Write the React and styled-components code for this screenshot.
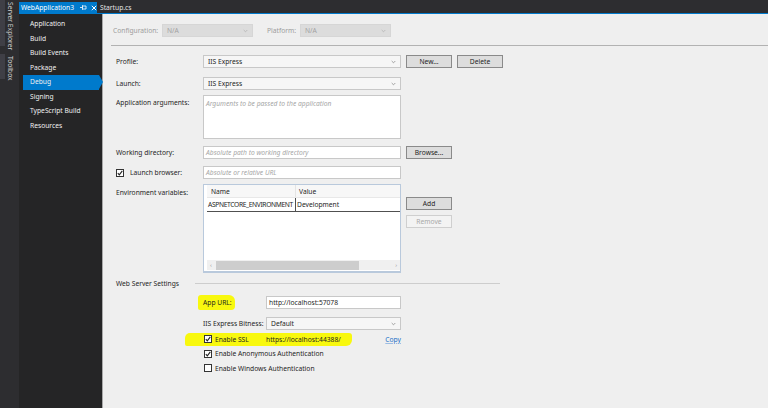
import React from 'react';
import styled, { createGlobalStyle } from 'styled-components';

const Global = createGlobalStyle`
  html, body { margin: 0; padding: 0; background: #2d2d30; }
  body { font-family: "Noto Sans", "Open Sans", sans-serif; font-size: 6.7px; color: #1e1e1e; }
  * { box-sizing: border-box; }
`;

const Root = styled.div`
  display: flex;
  width: 768px;
  height: 408px;
  overflow: hidden;
  background: #2d2d30;
`;

const SideStrip = styled.div`
  width: 19px;
  flex: none;
  display: flex;
  flex-direction: column;
  gap: 8px;
`;

const VTab = styled.div`
  display: flex;
  height: ${p => p.$h}px;
`;

const VStripe = styled.div`
  width: 5px;
  background: #3f3f46;
`;

const VText = styled.div`
  writing-mode: vertical-rl;
  color: #d0d0d0;
  padding: 2px 0 0 1px;
  font-size: 6.7px;
  white-space: nowrap;
`;

const Main = styled.div`
  flex: 1;
  display: flex;
  flex-direction: column;
  min-width: 0;
`;

const TabBar = styled.div`
  height: 14px;
  flex: none;
  display: flex;
  align-items: flex-end;
  border-bottom: 1px solid #007acc;
  background: #2d2d30;
`;

const DocTab = styled.div`
  height: 11px;
  display: flex;
  align-items: center;
  padding: 0 2px;
  gap: 6px;
  color: ${p => (p.$active ? '#ffffff' : '#e4e4e4')};
  background: ${p => (p.$active ? '#007acc' : 'transparent')};
  width: ${p => (p.$w ? `${p.$w}px` : 'auto')};
  margin-left: ${p => p.$ml || 0}px;
  white-space: nowrap;
`;

const TabIcons = styled.div`
  display: flex;
  align-items: center;
  gap: 4px;
  margin-left: auto;
`;

const Body = styled.div`
  flex: 1;
  display: flex;
  min-height: 0;
`;

const Nav = styled.div`
  width: 83px;
  flex: none;
  background: #252526;
  padding-top: 3px;
  display: flex;
  flex-direction: column;
`;

const NavItem = styled.div`
  position: relative;
  height: 14.5px;
  line-height: 14.5px;
  margin-left: 4px;
  width: 76px;
  padding-left: 7px;
  color: #f1f1f1;
  background: ${p => (p.$active ? '#007acc' : 'transparent')};
  z-index: 2;
  &::after {
    content: '';
    display: ${p => (p.$active ? 'block' : 'none')};
    position: absolute;
    right: -4px;
    top: 0;
    border-left: 4px solid #007acc;
    border-top: 7.25px solid transparent;
    border-bottom: 7.25px solid transparent;
  }
`;

const Content = styled.div`
  flex: 1;
  background: #efefef;
  border-left: 1px solid #a8a8a8;
  padding-top: 10px;
  display: flex;
  flex-direction: column;
`;

const ConfigRow = styled.div`
  display: flex;
  align-items: center;
  height: 13px;
  padding-left: 10px;
`;

const DimLabel = styled.span`
  color: #9c9c9c;
  width: ${p => p.$w}px;
  flex: none;
  white-space: nowrap;
`;

const Combo = styled.div`
  width: ${p => p.$w}px;
  height: 13px;
  flex: none;
  display: flex;
  align-items: center;
  padding: 0 4px;
  background: ${p => (p.$disabled ? '#dcdcdc' : '#f6f6f6')};
  border: 1px solid ${p => (p.$disabled ? '#d6d6d6' : '#c8c8c8')};
  color: ${p => (p.$disabled ? '#a2a2a2' : '#1e1e1e')};
  margin-right: ${p => p.$mr || 0}px;
  white-space: nowrap;
`;

const Chevron = styled.svg`
  margin-left: auto;
  width: 5px;
  height: 4px;
`;

const Separator = styled.div`
  height: 1px;
  background: #b2b2b2;
  margin: 8px 0 0 8px;
`;

const Form = styled.div`
  padding-left: 13px;
  display: flex;
  flex-direction: column;
`;

const Row = styled.div`
  position: relative;
  display: flex;
  align-items: ${p => p.$align || 'center'};
  margin-top: ${p => p.$mt || 0}px;
`;

const Label = styled.div`
  width: ${p => p.$w || 87}px;
  flex: none;
  display: flex;
  align-items: center;
  gap: 3px;
  white-space: nowrap;
  padding-top: ${p => p.$pt || 0}px;
  position: relative;
  z-index: 1;
`;

const TextBox = styled.div`
  width: ${p => p.$w || 198}px;
  height: ${p => p.$h || 13}px;
  flex: none;
  background: #ffffff;
  border: 1px solid #c8c8c8;
  padding: ${p => (p.$multi ? '3px 2px' : '0 2px')};
  display: flex;
  align-items: ${p => (p.$multi ? 'flex-start' : 'center')};
  white-space: nowrap;
  color: #1e1e1e;
`;

const Placeholder = styled.span`
  font-style: italic;
  color: #a6a6a6;
`;

const Button = styled.div`
  width: 46px;
  height: 13px;
  flex: none;
  display: flex;
  align-items: center;
  justify-content: center;
  background: ${p => (p.$disabled ? '#f3f3f3' : '#dddddd')};
  border: 1px solid ${p => (p.$disabled ? '#cfcfcf' : '#8a8a8a')};
  color: ${p => (p.$disabled ? '#a8a8a8' : '#1e1e1e')};
  margin-left: ${p => p.$ml || 0}px;
`;

const ButtonColumn = styled.div`
  display: flex;
  flex-direction: column;
  gap: 5px;
  padding-top: 13px;
  margin-left: 5px;
`;

const Grid = styled.div`
  width: 198px;
  height: 89px;
  flex: none;
  background: #ffffff;
  border: 1px solid #b9c9dc;
  border-bottom-width: 2px;
  display: flex;
  flex-direction: column;
  padding: 0 0 1px 3px;
`;

const GridHeader = styled.div`
  display: flex;
  height: 13px;
  background: #f7f7f7;
  border-bottom: 1px solid #e8e8e8;
`;

const GridRow = styled.div`
  display: flex;
  height: 14px;
  border-bottom: 1px solid #505050;
`;

const Cell = styled.div`
  width: ${p => (p.$w ? `${p.$w}px` : 'auto')};
  flex: ${p => (p.$w ? 'none' : '1')};
  display: flex;
  align-items: center;
  padding-left: ${p => p.$pl ?? 3}px;
  border-right: ${p => (p.$sep ? `1px solid ${p.$sep}` : 'none')};
  white-space: nowrap;
  overflow: hidden;
  letter-spacing: ${p => (p.$tight ? '-0.35px' : 'normal')};
`;

const ScrollBar = styled.div`
  margin-top: auto;
  height: 10px;
  display: flex;
  align-items: center;
  background: #f0f0f0;
  color: #9a9a9a;
  font-size: 6px;
  padding: 0 3px 0 3px;
`;

const Thumb = styled.div`
  height: 9px;
  width: 143px;
  background: #cdcdcd;
  margin-left: 4px;
`;

const ScrollArrow = styled.span`
  margin-left: ${p => (p.$right ? 'auto' : '0')};
  line-height: 1;
`;

const SectionRow = styled.div`
  display: flex;
  align-items: center;
  height: 10px;
  margin-top: 5px;
`;

const SectionRule = styled.div`
  height: 1px;
  width: 305px;
  background: #cdcdcd;
`;

const SubForm = styled.div`
  padding-left: 87px;
  display: flex;
  flex-direction: column;
`;

const Highlight = styled.span`
  background: #f8f80e;
  border-radius: 3px 6px 4px 2px;
  padding: 3px 3px 3px 5px;
  margin-left: -5px;
`;

const CheckRow = styled.div`
  position: relative;
  display: flex;
  align-items: center;
  width: 198px;
  height: 14.5px;
  margin-top: ${p => p.$mt || 0}px;
  &::before {
    content: '';
    display: ${p => (p.$marked ? 'block' : 'none')};
    position: absolute;
    left: -18px;
    width: 167px;
    top: 1px;
    height: 13px;
    background: #f8f80e;
    border-radius: 5px 3px 6px 2px;
    z-index: 0;
  }
  & > * { position: relative; z-index: 1; }
`;

const Box = styled.span`
  width: 8px;
  height: 8px;
  flex: none;
  background: #ffffff;
  border: 1px solid #333333;
  display: inline-flex;
  align-items: center;
  justify-content: center;
  margin-left: ${p => p.$ml ?? 1}px;
  margin-right: 3px;
`;

const CheckText = styled.span`
  white-space: nowrap;
  width: ${p => (p.$w ? `${p.$w}px` : 'auto')};
`;

const Link = styled.span`
  margin-left: auto;
  color: #1c6fc7;
  text-decoration: underline;
  text-decoration-color: #9bbce3;
`;

const Check = () => (
  <svg width="6" height="6" viewBox="0 0 6 6">
    <path d="M0.8 3.2 L2.3 4.8 L5.3 0.8" fill="none" stroke="#222" strokeWidth="1.1" />
  </svg>
);

const CheckBox = ({ checked, ml }) => <Box $ml={ml}>{checked ? <Check /> : null}</Box>;

const Down = ({ color = '#8c8c8c' }) => (
  <Chevron viewBox="0 0 5 4">
    <path d="M0.7 1 L2.5 2.8 L4.3 1" fill="none" stroke={color} strokeWidth="0.8" />
  </Chevron>
);

const PinIcon = () => (
  <svg width="7" height="7" viewBox="0 0 7 7">
    <path d="M0 3.5 H2.5 M2.5 1.2 V5.8 M2.5 2 H6 V5 H2.5" fill="none" stroke="#fff" strokeWidth="0.8" />
  </svg>
);

const CloseIcon = () => (
  <svg width="6" height="6" viewBox="0 0 6 6">
    <path d="M0.8 0.8 L5.2 5.2 M5.2 0.8 L0.8 5.2" stroke="#fff" strokeWidth="1" />
  </svg>
);

const navItems = ['Application', 'Build', 'Build Events', 'Package', 'Debug', 'Signing', 'TypeScript Build', 'Resources'];

export default function App() {
  return (
    <>
      <Global />
      <Root>
        <SideStrip>
          <VTab $h={46}>
            <VStripe />
            <VText>Server Explorer</VText>
          </VTab>
          <VTab $h={25}>
            <VStripe />
            <VText>Toolbox</VText>
          </VTab>
        </SideStrip>
        <Main>
          <TabBar>
            <DocTab $active $w={78}>
              WebApplication3
              <TabIcons>
                <PinIcon />
                <CloseIcon />
              </TabIcons>
            </DocTab>
            <DocTab $ml={1}>Startup.cs</DocTab>
          </TabBar>
          <Body>
            <Nav>
              {navItems.map(n => (
                <NavItem key={n} $active={n === 'Debug'}>{n}</NavItem>
              ))}
            </Nav>
            <Content>
              <ConfigRow>
                <DimLabel $w={49}>Configuration:</DimLabel>
                <Combo $w={91} $disabled $mr={14}>N/A<Down color="#b4b4b4" /></Combo>
                <DimLabel $w={33}>Platform:</DimLabel>
                <Combo $w={91} $disabled>N/A<Down color="#b4b4b4" /></Combo>
              </ConfigRow>
              <Separator />
              <Form>
                <Row $mt={9}>
                  <Label>Profile:</Label>
                  <Combo $w={198}>IIS Express<Down /></Combo>
                  <Button $ml={5}>New...</Button>
                  <Button $ml={5}>Delete</Button>
                </Row>
                <Row $mt={9}>
                  <Label>Launch:</Label>
                  <Combo $w={198}>IIS Express<Down /></Combo>
                </Row>
                <Row $mt={5} $align="flex-start">
                  <Label $pt={3}>Application arguments:</Label>
                  <TextBox $h={44} $multi>
                    <Placeholder>Arguments to be passed to the application</Placeholder>
                  </TextBox>
                </Row>
                <Row $mt={7}>
                  <Label>Working directory:</Label>
                  <TextBox><Placeholder>Absolute path to working directory</Placeholder></TextBox>
                  <Button $ml={5}>Browse...</Button>
                </Row>
                <Row $mt={7}>
                  <Label><CheckBox checked ml={0} />Launch browser:</Label>
                  <TextBox><Placeholder>Absolute or relative URL</Placeholder></TextBox>
                </Row>
                <Row $mt={5} $align="flex-start">
                  <Label $pt={4}>Environment variables:</Label>
                  <Grid>
                    <GridHeader>
                      <Cell $w={89} $pl={4} $sep="#e4e4e4">Name</Cell>
                      <Cell>Value</Cell>
                    </GridHeader>
                    <GridRow>
                      <Cell $w={89} $pl={1} $sep="#505050" $tight>ASPNETCORE_ENVIRONMENT</Cell>
                      <Cell $pl={1}>Development</Cell>
                    </GridRow>
                    <ScrollBar>
                      <ScrollArrow>‹</ScrollArrow>
                      <Thumb />
                      <ScrollArrow $right>›</ScrollArrow>
                    </ScrollBar>
                  </Grid>
                  <ButtonColumn>
                    <Button>Add</Button>
                    <Button $disabled>Remove</Button>
                  </ButtonColumn>
                </Row>
                <SectionRow>
                  <Label $w={79}>Web Server Settings</Label>
                  <SectionRule />
                </SectionRow>
                <SubForm>
                  <Row $mt={7}>
                    <Label $w={63}><Highlight>App URL:</Highlight></Label>
                    <TextBox $w={135}>http://localhost:57078</TextBox>
                  </Row>
                  <Row $mt={7}>
                    <Label $w={63}>IIS Express Bitness:</Label>
                    <Combo $w={135}>Default<Down /></Combo>
                  </Row>
                  <CheckRow $mt={2} $marked>
                    <CheckBox checked />
                    <CheckText $w={51}>Enable SSL</CheckText>
                    <CheckText>https://localhost:44388/</CheckText>
                    <Link>Copy</Link>
                  </CheckRow>
                  <CheckRow>
                    <CheckBox checked />
                    <CheckText>Enable Anonymous Authentication</CheckText>
                  </CheckRow>
                  <CheckRow>
                    <CheckBox />
                    <CheckText>Enable Windows Authentication</CheckText>
                  </CheckRow>
                </SubForm>
              </Form>
            </Content>
          </Body>
        </Main>
      </Root>
    </>
  );
}
